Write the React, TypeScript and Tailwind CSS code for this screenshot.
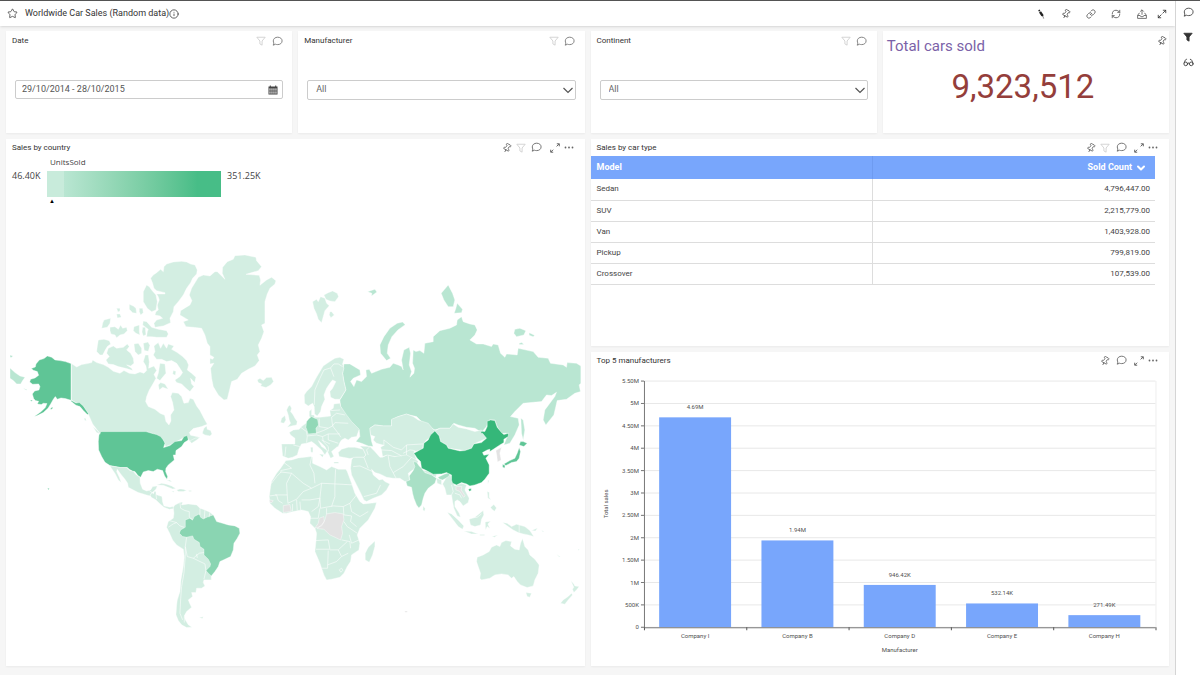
import type { ReactNode } from "react";
import { ChevronDown, Glasses, Info, Link, Maximize2, Pin, RefreshCw, Star } from "lucide-react";

type Shape = { d: string; fill: string };
type Region = { at: string; shapes: Shape[]; borders?: string };

const tone = {
  base: "#d3eee2",
  russia: "#b9e6d2",
  india: "#a9e0c6",
  germany: "#92d8b7",
  brazil: "#8ad5b2",
  usa: "#5fc596",
  china: "#35b779",
  none: "#e3e3e3",
};

const regions: Region[] = [
  {
    at: "translate(0 0)",
    shapes: [
      // Canada mainland
      { fill: tone.base, d: "M214,371 L230,381 245,374 262,371 275,368 278,360 290,368 310,374 325,382 340,394 360,400 372,392 388,400 405,402 420,396 432,400 440,392 438,378 430,365 436,345 445,345 448,366 446,385 462,378 470,392 462,404 468,415 460,430 448,450 440,470 437,485 445,500 465,508 480,520 494,526 498,545 507,555 513,543 512,525 522,510 518,488 512,470 517,458 535,460 545,470 552,490 565,488 570,475 580,478 590,498 600,512 612,535 622,553 605,560 580,566 568,578 572,586 600,592 578,608 562,598 553,592 530,605 510,615 497,620 490,602 470,585 440,576 303,575 303,585 290,568 278,552 266,525 250,498 228,489 214,480Z" },
      // Arctic islands
      { fill: tone.base, d: "M500,72 L520,66 545,64 560,66 572,72 585,75 592,90 590,102 578,115 572,128 560,145 550,165 535,185 522,200 520,215 510,235 512,248 490,258 465,262 462,250 470,240 488,235 480,228 465,225 468,215 475,210 472,195 478,180 475,170 470,162 495,162 495,158 470,152 462,145 458,130 452,115 460,105 470,98 482,88 490,95 492,80Z M440,135 L448,140 455,150 468,165 472,185 468,210 455,215 442,205 430,185 430,155Z M440,245 L455,262 475,268 500,272 505,282 500,292 470,292 455,290 440,290 442,275 445,268 428,255 430,243Z" },
      { fill: tone.base, d: "M388,193 L400,198 408,205 410,220 398,218 388,208Z M418,205 L428,205 430,218 422,225 418,215Z M350,205l10,0 0,8 -6,3Z M350,222l10,0 4,10 -12,2Z M312,240 L332,235 330,250 322,262 305,265 308,250Z M330,262 L345,260 355,268 362,255 368,265 380,262 382,272 372,282 360,285 350,293 345,285 333,282 330,272Z M402,260 L418,255 418,275 420,285 408,280 400,272Z M428,262l8,0 2,22 -8,4 -4,-12Z" },
      { fill: tone.base, d: "M295,300 L312,298 328,302 332,312 322,320 315,332 308,345 300,345 290,335 292,318Z M325,325 L340,318 350,325 370,322 382,312 388,320 380,330 392,340 400,355 402,370 392,378 380,375 395,385 398,392 380,386 355,380 340,374 325,372 318,360 328,350 320,340Z M402,312 L415,310 425,325 425,340 415,345 405,335Z M430,310l14,-4 6,10 -5,18 -12,-2Z" },
      { fill: tone.base, d: "M462,318 L475,308 482,325 490,310 500,325 505,312 522,318 515,328 532,338 548,350 560,362 566,375 562,390 575,400 588,412 584,428 572,415 575,432 582,440 570,455 558,445 545,432 530,428 525,420 540,410 548,398 540,385 530,370 515,362 500,365 485,358 470,358 460,345 465,335Z M480,370 L495,372 498,400 488,412 480,422 470,415 475,400Z M482,428 L495,432 505,448 488,442 478,450 475,435Z M520,392l8,2 -2,12 -8,-4Z" },
      // Alaska
      { fill: tone.usa, d: "M213,371 L196,365 180,362 165,360 155,352 142,348 132,356 118,360 108,372 106,381 94,386 100,391 112,395 116,406 105,414 92,418 89,426 98,433 116,432 120,440 117,450 104,453 97,462 101,476 106,482 116,484 112,492 124,494 130,490 141,491 136,503 122,516 103,530 112,527 130,518 144,505 152,492 160,478 166,470 172,478 183,474 196,476 213,481 228,489 238,488 250,498 258,510 266,522 262,524 250,512 240,500 228,496 213,484Z M152,504l7,-3 -2,6 -5,2Z M92,480l5,0 -1,4 -4,-1Z" },
      // Chukotka, wrapped over the date line
      { fill: tone.russia, d: "M30,384 L45,398 60,408 75,412 68,422 62,432 50,432 40,422 30,415Z M30,345l9,3 -5,5 -4,-1Z M69,445l12,4 -2,2Z" },
      // Russia
      { fill: tone.russia, d: "M1032,372 L1050,372 1080,390 1082,405 1060,415 1052,425 1062,440 1070,420 1085,425 1100,410 1098,390 1108,388 1115,400 1145,388 1170,382 1180,370 1195,375 1205,380 1210,390 1205,360 1212,330 1228,322 1232,340 1228,375 1235,395 1230,412 1242,400 1244,385 1238,370 1240,330 1248,335 1260,332 1272,340 1275,310 1300,305 1300,290 1320,272 1350,265 1370,255 1372,240 1385,230 1390,245 1410,252 1425,255 1432,270 1425,285 1410,300 1430,312 1450,312 1475,320 1480,312 1495,315 1502,340 1515,352 1520,342 1552,345 1555,325 1600,335 1615,352 1645,355 1652,370 1690,375 1700,382 1702,368 1730,370 1743,378 1743,430 1738,435 1742,455 1725,460 1700,478 1672,482 1668,500 1662,525 1650,540 1638,555 1630,540 1635,510 1650,490 1665,470 1670,457 1655,467 1640,465 1625,485 1600,487 1570,490 1545,515 1532,530 1555,535 1558,555 1545,585 1530,610 1512,615 1518,600 1526,580 1505,580 1492,560 1485,540 1468,540 1460,560 1445,577 1425,565 1400,562 1375,555 1362,550 1350,565 1320,565 1305,570 1285,560 1265,545 1250,530 1220,523 1195,530 1175,540 1175,558 1150,558 1125,555 1110,565 1112,585 1115,605 1120,620 1105,618 1085,610 1068,605 1080,590 1078,570 1050,550 1035,525 1022,500 1020,480 1038,450 1032,425 1028,400Z" },
      { fill: tone.russia, d: "M1208,246 L1216,254 1194,270 1176,290 1165,315 1162,340 1172,355 1160,362 1142,340 1140,315 1152,290 1170,265 1192,250Z M1103,155 L1125,148 1131,156 1115,168 1116,160Z" },
    ],
  },
  {
    at: "translate(450 0)",
    shapes: [
      // Greenland, Svalbard, Iceland
      { fill: tone.base, d: "M195,95 L202,95 225,118 217,100 218,82 232,65 250,58 255,47 285,45 318,52 320,62 335,80 325,92 288,103 328,106 332,120 330,136 350,120 365,112 378,122 375,132 360,145 352,162 345,185 345,215 345,250 335,255 342,275 335,295 325,315 330,335 322,345 328,362 315,378 295,388 275,400 262,418 245,425 240,445 232,478 222,480 205,465 190,440 185,415 182,385 192,370 180,372 180,355 188,358 192,352 180,345 180,320 172,310 165,285 155,265 130,262 108,260 100,245 115,240 90,225 92,212 120,195 126,182 118,165 125,145 145,112 160,105 180,108Z" },
      { fill: tone.base, d: "M488,185 L500,178 505,185 512,170 525,175 530,190 538,197 525,212 520,230 515,248 505,238 500,222 492,205Z M522,165 L535,158 548,153 562,160 566,170 555,185 540,183 528,178Z M540,215l5,0 8,10 -10,8 -5,-8Z M322,420 L330,415 340,422 350,413 365,412 371,425 362,435 348,443 332,438 335,432 325,428Z" },
    ],
  },
  {
    at: "translate(0 480)",
    shapes: [
      { fill: tone.usa, d: "M303,95 L438,95 455,100 470,104 482,110 490,120 495,130 491,143 510,137 525,125 545,122 552,110 562,107 565,120 553,128 545,140 528,152 527,165 520,165 523,180 505,195 498,205 497,215 503,230 501,238 494,228 488,212 472,208 460,215 445,212 430,216 422,232 415,228 405,215 398,214 388,208 382,203 362,203 345,200 330,197 315,187 305,170 296,150 295,125 297,105Z M143,264l5,2 -3,5Z" },
      // Mexico, Central America, Caribbean
      { fill: tone.base, d: "M330,198 L345,200 362,203 380,203 390,212 400,214 408,224 420,232 421,250 428,268 440,273 452,270 458,260 472,258 468,268 455,280 450,288 442,286 430,282 415,278 400,270 385,262 383,250 375,238 362,222 352,208 350,215 358,232 364,248 355,240 346,222 338,210Z M450,286 L455,278 462,280 462,275 468,275 468,284 486,290 488,306 492,318 500,320 510,322 518,320 522,326 508,328 492,322 478,310 468,300 455,293Z M470,255 L485,250 500,253 515,258 528,266 518,267 505,262 490,256Z M530,270 L540,267 550,268 560,272 550,275 535,275Z M515,273l8,1 -3,3Z M566,272l8,0 0,3 -7,0Z M500,242l10,-2 6,6Z" },
      { fill: tone.base, d: "M607,100 L612,85 620,78 622,88 632,92 636,102 630,108 615,105Z M565,118 L572,122 585,115 600,112 590,120 575,130Z M252,55l5,0 2,8 -5,-2Z M278,80 L290,90 301,102 290,98Z" },
      // South America
      { fill: tone.base, d: "M520,322 L525,315 540,308 548,306 545,315 565,312 590,315 600,325 615,330 630,337 640,345 650,365 700,400 634,528 634,540 612,540 610,548 615,558 605,565 590,565 588,578 575,578 578,590 565,600 570,612 575,622 560,635 553,648 556,660 565,675 576,682 560,683 545,675 535,662 528,645 530,615 532,600 540,575 543,540 550,500 553,470 550,448 530,435 518,420 508,398 500,382 505,365 520,355 522,340Z M597,653 L610,651 608,656Z" },
      { fill: tone.brazil, d: "M556,360 L570,355 578,360 583,350 598,342 602,352 610,357 625,350 640,345 645,355 650,365 668,370 685,375 705,378 718,385 720,400 712,415 702,430 700,450 692,470 675,478 660,485 655,500 645,515 634,528 625,520 618,512 630,500 632,492 625,478 612,465 612,448 600,440 598,428 582,418 578,408 560,412 548,410 538,400 542,390 556,382Z" },
    ],
    borders: "M540,308 L542,325 555,332 568,335 568,352 578,360 M505,382 L520,372 530,368 540,378 552,382 M508,362 L530,368 M556,440 L556,470 552,520 545,560 542,600 540,640 548,660 M560,412 L556,440 562,470 580,475 598,460 612,458 M600,325 L600,345 M615,330 L613,355 M630,337 L627,352 M580,475 L600,485 615,492 618,512 612,538 M590,462 L592,474 M553,650 L553,668 M448,272 L462,282 M468,284 L470,298",
  },
  {
    at: "translate(780 300)",
    shapes: [
      // Scandinavia and the rest of Europe
      { fill: tone.base, d: "M133,165 L140,155 155,140 168,115 180,95 190,78 205,68 225,55 240,52 252,58 248,72 252,85 248,100 252,125 258,150 240,178 225,178 212,172 210,155 218,145 228,125 218,120 210,130 200,145 192,165 195,178 185,200 182,215 172,228 164,222 163,200 158,190 145,198 134,190Z M148,215 L155,207 155,225 162,225 165,232 152,235 148,228Z" },
      { fill: tone.base, d: "M100,270 L118,268 125,260 138,250 145,240 152,235 165,232 180,232 200,230 212,228 210,212 220,205 222,192 240,190 243,200 260,225 275,245 298,268 290,290 275,292 265,300 255,295 245,300 240,308 235,320 230,322 215,335 222,350 212,355 205,340 195,320 185,310 175,302 185,320 203,332 195,345 185,330 165,312 155,305 140,310 125,312 118,325 112,345 98,352 85,355 68,348 66,325 65,312 85,312 105,312 105,295 92,285 88,278Z M178,342l14,2 -4,8Z M152,322l7,0 0,15 -6,0Z M222,366l14,0 0,4 -14,0Z" },
      { fill: tone.base, d: "M85,200 L90,195 95,205 92,215 100,225 105,235 112,245 110,255 95,258 82,262 92,250 88,240 85,225 80,210Z M65,235 L75,227 78,240 72,250 62,248Z M235,338 L245,328 265,322 285,322 310,328 318,345 312,352 290,352 270,356 250,352 238,350Z" },
      // Middle East and Central Asia
      { fill: tone.base, d: "M275,360 L280,352 312,352 318,345 310,328 300,318 330,320 345,335 360,352 368,352 382,345 405,350 420,345 440,340 460,350 475,365 465,385 445,400 450,425 435,425 420,415 400,415 380,412 360,402 345,398 335,388 340,405 358,420 368,418 375,425 390,432 380,450 365,465 340,475 320,485 312,480 305,465 290,435 275,405 272,385Z" },
      { fill: tone.base, d: "M330,265 L345,255 370,258 395,258 395,238 415,230 440,222 460,230 475,240 505,250 520,268 540,275 522,285 500,300 490,312 488,330 462,335 470,360 440,345 405,350 382,345 368,350 365,330 362,322 372,316 350,310 340,300 345,290 332,285Z" },
      // Africa
      { fill: tone.base, d: "M78,362 L95,360 115,354 152,350 158,352 158,370 180,380 200,390 215,380 235,388 258,388 262,395 275,430 285,460 300,485 310,492 350,488 345,505 325,540 300,565 292,585 300,610 297,630 275,645 272,665 262,680 252,700 240,712 215,718 200,720 192,705 180,670 165,635 168,605 170,580 165,565 150,550 152,530 145,515 125,510 100,515 80,520 68,520 45,505 30,490 28,470 32,440 35,425 50,400 62,385Z M345,603 L345,620 338,645 328,667 316,660 316,640 325,622Z" },
      { fill: tone.germany, d: "M148,235 L155,230 165,235 173,238 176,255 168,265 170,280 145,282 138,262 140,245Z" },
      { fill: tone.none, d: "M200,522 L225,518 250,522 252,540 245,560 248,580 242,600 225,592 210,585 192,568 172,566 188,552 195,540Z M178,535 L192,530 193,545 185,558 165,565 175,550Z M70,497 L90,494 94,514 70,518Z M28,480l12,2 -4,6 -6,0Z" },
    ],
    borders: "M163,195 L165,150 180,115 192,90 212,84 222,110 M212,84 L222,72 235,72 248,80 M100,315 L120,320 M78,320 L75,348 M122,262 L140,275 142,290 140,308 M178,236 L178,260 205,265 218,258 215,232 230,220 255,225 M168,280 L190,272 205,265 M142,288 L170,285 188,290 205,282 240,282 M218,258 L225,248 265,250 M205,282 L205,300 235,310 M188,290 L190,305 205,320 206,335 M212,212 L240,210 M218,258 L235,280 243,292 M185,300 L210,312 M312,352 L325,385 M280,380 L300,378 345,398 M312,470 L350,460 362,435 M385,348 L390,380 408,414 M400,398 L430,380 455,352 M372,300 L400,322 425,330 440,315 490,312 M365,330 L395,332 425,348 M440,315 L440,345 M372,300 L372,318 M330,320 L320,330 325,345 M65,395 L50,410 35,430 M72,368 L95,385 62,392 M60,396 L95,400 80,430 82,465 45,465 M95,400 L130,430 155,445 185,430 225,432 227,388 M155,352 L150,375 162,400 165,430 M185,430 L180,475 M225,432 L280,435 M225,432 L225,470 215,500 M30,468 L50,465 55,482 68,490 M82,465 L84,490 110,478 130,455 155,445 M98,492 L98,514 M110,480 L112,512 M120,485 L122,510 M125,480 L150,480 180,475 175,500 155,515 M180,475 L182,505 220,498 250,500 270,490 290,465 M270,490 L275,515 300,530 325,515 M180,505 L175,535 150,535 M250,500 L252,525 275,528 272,545 290,560 M252,545 L262,560 292,580 M200,505 L200,522 M245,600 L270,605 272,625 M268,585 L275,610 298,600 M168,602 L205,600 210,628 168,628 M210,630 L235,630 262,605 M205,632 L203,685 185,685 M203,675 L230,665 245,650 235,630 M245,650 L265,640 M238,690l7,-5 4,6 -6,6Z",
  },
  {
    at: "translate(1200 90)",
    shapes: [
      { fill: tone.russia, d: "M363,445 L370,450 375,480 370,510 365,490Z M145,45 L158,70 165,90 160,110 145,110 132,90 124,70Z M172,100 L188,118 185,128 163,130 168,115Z M345,178 L360,175 378,182 372,195 350,200 342,190Z M388,188l16,8 -4,4 -12,-4Z M358,220l8,-2 6,6 -14,0Z" },
      { fill: tone.usa, d: "M362,515 L370,515 382,520 372,530 358,525Z M358,533 L362,545 358,565 350,575 335,578 318,587 312,582 330,572 345,565 352,550Z M308,583l8,4 -2,8 -6,-4Z" },
      { fill: tone.none, d: "M288,542 L305,532 300,550 304,570 293,576 291,558Z" },
    ],
  },
  {
    at: "translate(1200 570)",
    shapes: [
      // Mongolia, Nepal, Bangladesh, Indochina
      { fill: tone.base, d: "M105,3 L120,-5 150,-5 160,-18 175,-8 200,-3 225,5 245,0 260,25 222,42 215,55 195,62 145,55 140,45 122,35 118,18Z M68,122 L80,122 110,133 108,142 90,136 75,128Z M110,145 L125,150 125,165 112,160Z M70,228l6,8 -2,8 -5,-4Z" },
      { fill: tone.base, d: "M138,145 L150,130 158,155 165,168 185,160 200,165 195,180 208,205 205,218 190,228 180,215 172,210 165,215 165,230 178,250 182,262 172,258 162,235 158,215 155,195 140,195 135,175 128,162Z" },
      { fill: tone.india, d: "M40,95 L50,97 58,108 65,115 75,128 95,135 110,145 105,160 85,175 75,190 70,205 65,225 57,234 50,225 42,205 38,190 35,172 22,168 18,155 30,150 28,138 40,122 45,110Z M114,142 L135,132 150,127 148,138 138,145 128,150 120,148Z" },
      { fill: tone.none, d: "M168,170l18,0 -2,10 12,18 -5,4 -12,-18 -11,-4Z M15,543h7v4h-7z" },
      { fill: tone.china, d: "M42,70 L60,60 70,55 72,40 85,30 92,15 105,3 118,18 122,35 140,45 145,55 180,63 195,62 215,55 222,42 245,38 260,25 248,10 242,10 245,4 255,5 262,-10 262,-26 272,-30 285,-28 292,-8 305,8 312,14 326,10 325,20 312,28 312,38 300,45 285,55 270,65 270,58 262,60 248,68 252,76 268,73 258,85 268,105 268,130 255,148 245,158 225,165 210,168 200,162 185,158 170,165 158,160 155,150 155,135 140,128 125,132 100,133 80,122 65,115 62,95 52,85Z M206,177l8,-1 0,6 -6,2Z" },
      // Islands and Oceania
      { fill: tone.base, d: "M142,247 L155,252 175,270 192,288 188,298 175,290 160,270Z M192,303 L215,305 235,312 215,312Z M208,268 L225,262 240,250 250,242 252,255 245,268 242,285 225,290 212,285Z M256,276l16,-2 -8,8 6,14 -8,-6 -5,10Z M262,185l6,2 0,15 6,8 -10,-6Z M272,232l10,-8 8,10 -6,10 -8,-6Z M264,150l4,2 -4,10Z M240,314l14,0 0,3 -14,0Z M276,320l18,-5 -10,7Z M308,278 L322,280 335,290 350,283 375,290 390,302 402,320 385,315 370,312 355,308 340,300 325,290Z M395,302l18,-8 -6,9Z M425,300l8,6 -4,0Z" },
      { fill: tone.base, d: "M232,382 L250,375 268,365 275,352 290,345 300,350 305,338 318,332 335,335 332,348 345,358 358,360 362,340 368,326 375,350 385,360 390,375 405,388 418,405 415,430 405,450 400,468 382,473 362,465 352,455 342,440 335,445 325,435 305,432 285,435 270,445 245,450 240,445 242,430 235,410 230,395Z M378,488 L395,490 390,502 382,500Z M513,452 L522,462 525,468 538,470 530,480 522,488 518,478 522,472Z M515,490 L518,495 505,510 495,523 482,520 490,510 505,500Z M470,373l12,8 -4,0Z M534,358l5,0 -3,4Z" },
    ],
    borders: "M358,285 L358,308 M155,165 L160,185 155,195 M165,190 L180,195 185,205 M215,264 L232,262 245,252 M10,70 L30,60 45,62",
  },
];

function WorldMap() {
  return (
    <svg viewBox="18 -102 1736 1380" className="block w-full" role="img" aria-label="Units sold by country">
      {regions.map((region) => (
        <g key={region.at} transform={region.at}>
          {region.shapes.map((shape) => (
            <path key={shape.d} d={shape.d} fill={shape.fill} stroke="#fff" strokeWidth="1.2" strokeLinejoin="round" />
          ))}
          {region.borders && <path d={region.borders} fill="none" stroke="#fff" strokeOpacity="0.85" strokeWidth="2" />}
        </g>
      ))}
    </svg>
  );
}

const bars = [
  { name: "Company I", label: "4.69M", value: 4.69 },
  { name: "Company B", label: "1.94M", value: 1.94 },
  { name: "Company D", label: "946.42K", value: 0.946 },
  { name: "Company E", label: "532.14K", value: 0.532 },
  { name: "Company H", label: "271.49K", value: 0.271 },
];
const ticks = ["0", "500K", "1M", "1.50M", "2M", "2.50M", "3M", "3.50M", "4M", "4.50M", "5M", "5.50M"];

function BarChart() {
  const left = 53;
  const right = 565;
  const base = 258.5;
  const step = 22.4;
  const band = (right - left) / bars.length;

  return (
    <svg viewBox="0 0 579 296" className="block w-full" fontFamily="Roboto, sans-serif" fontSize="6" fill="#505050">
      {ticks.map((tick, i) => (
        <g key={tick}>
          <line x1={left - 3} x2={right} y1={base - i * step} y2={base - i * step} stroke="#e8e8e8" strokeWidth="1" />
          <line x1={left - 3} x2={left} y1={base - i * step} y2={base - i * step} stroke="#777" strokeWidth="1" />
          <text x="48" y={base - i * step + 2} textAnchor="end">{tick}</text>
        </g>
      ))}
      <line x1={right + 0.5} x2={right + 0.5} y1="12" y2={base} stroke="#eee" />
      <line x1={left + 0.5} x2={left + 0.5} y1="12" y2={base} stroke="#777" />
      {bars.map((bar, i) => {
        const center = left + band * (i + 0.5);
        const height = (bar.value / 0.5) * step;
        return (
          <g key={bar.name}>
            <rect x={center - 36} y={base - height} width="72" height={height} fill="#78a6fc" />
            <text x={center} y={base - height - 8} textAnchor="middle">{bar.label}</text>
            <text x={center} y="269" textAnchor="middle">{bar.name}</text>
          </g>
        );
      })}
      <line x1={left} x2={right} y1={base + 0.5} y2={base + 0.5} stroke="#777" />
      {[0, 1, 2, 3, 4, 5].map((i) => (
        <line key={i} x1={left + i * band + 0.5} x2={left + i * band + 0.5} y1={base} y2={base + 3} stroke="#555" />
      ))}
      <text x={(left + right) / 2} y="283" textAnchor="middle">Manufacturer</text>
      <text transform="translate(17 135) rotate(-90)" textAnchor="middle">Total sales</text>
    </svg>
  );
}

function FunnelIcon({ solid = false }: { solid?: boolean }) {
  return (
    <svg viewBox="0 0 12 12" className="size-[10px]" fill={solid ? "currentColor" : "none"} stroke="currentColor" strokeWidth="1">
      <path d="M1 1.5h10L7.3 6v5L4.7 9.5V6Z" strokeLinejoin="round" />
    </svg>
  );
}

function CommentIcon() {
  return (
    <svg viewBox="0 0 11 11" className="size-[11px]" fill="none" stroke="currentColor" strokeWidth="0.9">
      <path d="M5.7 1.2c2.5 0 4.4 1.5 4.4 3.7S8.200 8.600 5.700 8.600c-.8 0-1.500-.1-2.100-.4L1.200 9.200l.7-2.100C1.500 6.500 1.300 5.700 1.300 4.900c0-2.200 1.900-3.700 4.400-3.700Z" strokeLinejoin="round" />
    </svg>
  );
}

function ExpandIcon() {
  return (
    <svg viewBox="0 0 10 10" className="size-[10px]" fill="none" stroke="currentColor">
      <path d="M6.8.8h2.5v2.5M9.2.9 6.600 3.400M3.200 9.200H.7V6.700M.8 9.100l2.400-2.400" />
    </svg>
  );
}

function DotsIcon() {
  return (
    <svg viewBox="0 0 10 10" className="size-[10px]" fill="currentColor">
      <circle cx="1.500" cy="4.500" r="0.900" />
      <circle cx="5" cy="4.500" r="0.900" />
      <circle cx="8.500" cy="4.500" r="0.900" />
    </svg>
  );
}

function PenIcon() {
  return (
    <svg viewBox="0 0 10 10" className="size-[10px]" fill="#222">
      <path d="M2.200 1.200 3.600.6l.7 1.200-1.300.9ZM3 3.400l2-1.200 2.400 3.600-.1 2L5.300 7Z" />
      <path d="M7.300 8.200l1 1.200-1.700-.3Z" />
    </svg>
  );
}

function ExportIcon() {
  return (
    <svg viewBox="0 0 10 10" className="size-[10px]" fill="none" stroke="currentColor" strokeWidth="0.800" strokeLinejoin="round">
      <path d="M2.500 4.200H2L.6 6.500v2.900h8.800V6.500L8 4.200h-.5M.6 6.500h2.600l.6 1.200h2.400l.6-1.200h2.600M5 5.800V.9M3.200 2.600 5 .8l1.800 1.800" />
    </svg>
  );
}

function CalendarIcon() {
  return (
    <svg viewBox="0 0 10 10" className="size-[10px]" fill="#444">
      <path fillRule="evenodd" d="M.5 1.5h1.3V.4h1v1.1h4.4V.4h1v1.1h1.3v8H.5ZM1.3 3.5v1.2h1.3V3.5Zm2 0v1.2h1.3V3.5Zm2 0v1.2h1.3V3.5Zm2 0v1.2h1.3V3.5Zm-6 1.9v1.2h1.3V5.4Zm2 0v1.2h1.3V5.4Zm2 0v1.2h1.3V5.4Zm2 0v1.2h1.3V5.4Zm-6 1.9v1.2h1.3V7.3Zm2 0v1.2h1.3V7.3Zm2 0v1.2h1.3V7.3Zm2 0v1.2h1.3V7.3Z" />
    </svg>
  );
}

const PinIcon = () => <Pin className="size-[10px] rotate-30" strokeWidth={2} />;

function IconButton({ label, className, children }: { label: string; className: string; children: ReactNode }) {
  return (
    <button type="button" aria-label={label} className={`flex h-4 items-center justify-center ${className}`}>
      {children}
    </button>
  );
}

function PanelHeader({ title, filter = true }: { title: string; filter?: boolean }) {
  return (
    <div className="flex h-[17px] items-center pr-[11px] pl-[6px] text-[#666]">
      <h2 className="mr-auto text-[8px] leading-4 text-[#333]">{title}</h2>
      <IconButton label="Pin" className="w-[14px]"><PinIcon /></IconButton>
      {filter && <IconButton label="Filter" className="w-[14px] text-[#ccc]"><FunnelIcon /></IconButton>}
      <IconButton label="Comment" className="w-[18px]"><CommentIcon /></IconButton>
      <IconButton label="Expand" className="w-[18px]"><ExpandIcon /></IconButton>
      <IconButton label="More" className="w-[10px]"><DotsIcon /></IconButton>
    </div>
  );
}

function FilterCard({ title, id, children }: { title: string; id: string; children: ReactNode }) {
  return (
    <section className="h-[102px] bg-white shadow-xs">
      <div className="flex h-5 items-center px-[6px] text-[#777]">
        <label htmlFor={id} className="mr-auto text-[8px] leading-4 text-[#333]">{title}</label>
        <IconButton label="Clear filter" className="w-[14px] text-[#ccc]"><FunnelIcon /></IconButton>
        <IconButton label="Comment" className="w-[18px]"><CommentIcon /></IconButton>
      </div>
      <div className="px-[9px] pt-[29px]">{children}</div>
    </section>
  );
}

function SelectBox({ id }: { id: string }) {
  return (
    <div className="relative">
      <select id={id} className="block h-[20px] w-full appearance-none rounded-xs border border-[#ccc] bg-white px-2 text-[9px] text-[#666]">
        <option>All</option>
      </select>
      <svg viewBox="0 0 12 12" className="pointer-events-none absolute top-1 right-[2px] size-3" fill="none" stroke="#555" strokeWidth="1.200">
        <path d="M1.500 4 6 8.500 10.500 4" />
      </svg>
    </div>
  );
}

const rows = [
  ["Sedan", "4,796,447.00"],
  ["SUV", "2,215,779.00"],
  ["Van", "1,403,928.00"],
  ["Pickup", "799,819.00"],
  ["Crossover", "107,539.00"],
];

export default function App() {
  return (
    <div className="flex min-h-screen border-t border-[#555] bg-[#f6f6f6] font-[Roboto,sans-serif] text-[#444]">
      <div className="flex min-w-0 flex-1 flex-col">
        <header className="flex h-[25px] items-center bg-white pr-[6px] pl-[6px] shadow-sm">
          <IconButton label="Favourite" className="w-3"><Star className="size-[11px]" strokeWidth={1.75} /></IconButton>
          <h1 className="ml-[7px] text-[9px] text-[#333]">Worldwide Car Sales (Random data)</h1>
          <IconButton label="Info" className="w-[10px]"><Info className="size-[10px]" strokeWidth={2} /></IconButton>
          <div className="ml-auto flex text-[#555]">
            <IconButton label="Edit" className="w-[25px]"><PenIcon /></IconButton>
            <IconButton label="Pin" className="w-[25px]"><PinIcon /></IconButton>
            <IconButton label="Copy link" className="w-[25px]"><Link className="size-[10px]" strokeWidth={2} /></IconButton>
            <IconButton label="Refresh" className="w-[26px]"><RefreshCw className="size-[10px]" strokeWidth={2} /></IconButton>
            <IconButton label="Export" className="w-[26px]"><ExportIcon /></IconButton>
            <IconButton label="Full screen" className="w-[14px] text-[#333]"><Maximize2 className="size-[10px]" strokeWidth={2} /></IconButton>
          </div>
        </header>

        <main className="grid grid-cols-4 gap-[6px] px-[6px] pt-[5px] pb-2">
          <FilterCard title="Date" id="date">
            <div className="flex h-[19px] items-center rounded-xs border border-[#ccc] bg-white pr-1 pl-[6px]">
              <input id="date" defaultValue="29/10/2014 - 28/10/2015" className="min-w-0 flex-1 text-[9px] text-[#555] outline-none" />
              <CalendarIcon />
            </div>
          </FilterCard>
          <FilterCard title="Manufacturer" id="manufacturer"><SelectBox id="manufacturer" /></FilterCard>
          <FilterCard title="Continent" id="continent"><SelectBox id="continent" /></FilterCard>
          <section className="flex h-[102px] flex-col bg-white pt-[5px] shadow-xs">
            <div className="flex items-start pl-1">
              <h2 className="mr-auto text-[15px] leading-5 text-[#7b62a8]">Total cars sold</h2>
              <IconButton label="Pin" className="-mt-[3px] w-[14px] text-[#555]"><PinIcon /></IconButton>
            </div>
            <p className="mt-[11px] pr-[6px] text-center text-[33px] leading-10 text-[#943e3b]">9,323,512</p>
          </section>

          <section className="col-span-2 bg-white shadow-xs">
            <PanelHeader title="Sales by country" />
            <div className="pl-[6px] font-['Open_Sans',sans-serif] text-[9px]">
              <p className="pl-[38px] text-[8px] leading-3">UnitsSold</p>
              <div className="mt-[3px] flex h-[26px] gap-[6px]">
                <span className="w-[29px] leading-[10px]">46.40K</span>
                <div className="flex w-[174px]">
                  <div className="w-[17px] bg-[#c8ebdb]" />
                  <div className="flex-1 bg-linear-to-r from-[#b9e6d2] to-[#47bd87] to-85%" />
                </div>
                <span className="leading-[10px]">351.25K</span>
              </div>
              <p className="pl-[37px] text-[6px] leading-[9px] text-black">▲</p>
            </div>
            <WorldMap />
          </section>

          <div className="col-span-2 flex flex-col gap-[6px]">
            <section className="h-[207px] bg-white shadow-xs">
              <PanelHeader title="Sales by car type" />
              <div className="pr-[14px]">
                <table className="w-full table-fixed border-collapse text-[8px]">
                  <thead className="bg-[#78a6fc] text-[9px] text-white">
                    <tr className="h-[23px]">
                      <th className="border-r border-[#6e9bf0] p-0 pl-[6px] text-left">Model</th>
                      <th className="p-0 pr-2">
                        <button type="button" className="ml-auto flex items-center gap-[3px] font-bold">
                          Sold Count
                          <ChevronDown className="size-3" strokeWidth={4} />
                        </button>
                      </th>
                    </tr>
                  </thead>
                  <tbody>
                    {rows.map(([model, count]) => (
                      <tr key={model} className="h-[21px] border-b border-[#ddd]">
                        <td className="border-r border-[#ddd] p-0 pl-[6px]">{model}</td>
                        <td className="p-0 pr-[5px] text-right">{count}</td>
                      </tr>
                    ))}
                  </tbody>
                </table>
              </div>
            </section>
            <section className="flex-1 bg-white shadow-xs">
              <PanelHeader title="Top 5 manufacturers" filter={false} />
              <BarChart />
            </section>
          </div>
        </main>
      </div>

      <aside className="flex w-[25px] flex-col items-center gap-[9px] border-l border-[#d5d5d5] bg-white pt-[3px]">
        <IconButton label="Comments" className="w-5"><CommentIcon /></IconButton>
        <IconButton label="Filters" className="w-5 text-[#333]"><FunnelIcon solid /></IconButton>
        <IconButton label="View" className="w-5"><Glasses className="size-[11px]" strokeWidth={2} /></IconButton>
      </aside>
    </div>
  );
}
